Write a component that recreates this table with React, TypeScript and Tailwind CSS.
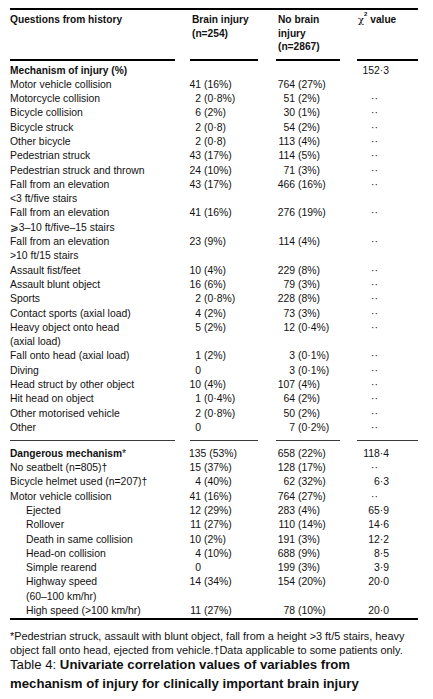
type Cell = [string, string];

type Row = {
  label: string[];
  b?: Cell;
  n?: Cell;
  chi?: string;
  bold?: boolean;
  star?: boolean;
  indent?: boolean;
};

const mechanism: Row[] = [
  { label: ["Mechanism of injury (%)"], bold: true, chi: "152·3" },
  { label: ["Motor vehicle collision"], b: ["41", "(16%)"], n: ["764", "(27%)"] },
  { label: ["Motorcycle collision"], b: ["2", "(0·8%)"], n: ["51", "(2%)"], chi: "··" },
  { label: ["Bicycle collision"], b: ["6", "(2%)"], n: ["30", "(1%)"], chi: "··" },
  { label: ["Bicycle struck"], b: ["2", "(0·8)"], n: ["54", "(2%)"], chi: "··" },
  { label: ["Other bicycle"], b: ["2", "(0·8)"], n: ["113", "(4%)"], chi: "··" },
  { label: ["Pedestrian struck"], b: ["43", "(17%)"], n: ["114", "(5%)"], chi: "··" },
  { label: ["Pedestrian struck and thrown"], b: ["24", "(10%)"], n: ["71", "(3%)"], chi: "··" },
  { label: ["Fall from an elevation", "<3 ft/five stairs"], b: ["43", "(17%)"], n: ["466", "(16%)"], chi: "··" },
  { label: ["Fall from an elevation", "⩾3–10 ft/five–15 stairs"], b: ["41", "(16%)"], n: ["276", "(19%)"], chi: "··" },
  { label: ["Fall from an elevation", ">10 ft/15 stairs"], b: ["23", "(9%)"], n: ["114", "(4%)"], chi: "··" },
  { label: ["Assault fist/feet"], b: ["10", "(4%)"], n: ["229", "(8%)"], chi: "··" },
  { label: ["Assault blunt object"], b: ["16", "(6%)"], n: ["79", "(3%)"], chi: "··" },
  { label: ["Sports"], b: ["2", "(0·8%)"], n: ["228", "(8%)"], chi: "··" },
  { label: ["Contact sports (axial load)"], b: ["4", "(2%)"], n: ["73", "(3%)"], chi: "··" },
  { label: ["Heavy object onto head", "(axial load)"], b: ["5", "(2%)"], n: ["12", "(0·4%)"], chi: "··" },
  { label: ["Fall onto head (axial load)"], b: ["1", "(2%)"], n: ["3", "(0·1%)"], chi: "··" },
  { label: ["Diving"], b: ["0", ""], n: ["3", "(0·1%)"], chi: "··" },
  { label: ["Head struct by other object"], b: ["10", "(4%)"], n: ["107", "(4%)"], chi: "··" },
  { label: ["Hit head on object"], b: ["1", "(0·4%)"], n: ["64", "(2%)"], chi: "··" },
  { label: ["Other motorised vehicle"], b: ["2", "(0·8%)"], n: ["50", "(2%)"], chi: "··" },
  { label: ["Other"], b: ["0", ""], n: ["7", "(0·2%)"], chi: "··" },
];

const dangerous: Row[] = [
  { label: ["Dangerous mechanism"], bold: true, star: true, b: ["135", "(53%)"], n: ["658", "(22%)"], chi: "118·4" },
  { label: ["No seatbelt (n=805)†"], b: ["15", "(37%)"], n: ["128", "(17%)"], chi: "··" },
  { label: ["Bicycle helmet used (n=207)†"], b: ["4", "(40%)"], n: ["62", "(32%)"], chi: "6·3" },
  { label: ["Motor vehicle collision"], b: ["41", "(16%)"], n: ["764", "(27%)"], chi: "··" },
  { label: ["Ejected"], indent: true, b: ["12", "(29%)"], n: ["283", "(4%)"], chi: "65·9" },
  { label: ["Rollover"], indent: true, b: ["11", "(27%)"], n: ["110", "(14%)"], chi: "14·6" },
  { label: ["Death in same collision"], indent: true, b: ["10", "(2%)"], n: ["191", "(3%)"], chi: "12·2" },
  { label: ["Head-on collision"], indent: true, b: ["4", "(10%)"], n: ["688", "(9%)"], chi: "8·5" },
  { label: ["Simple rearend"], indent: true, b: ["0", ""], n: ["199", "(3%)"], chi: "3·9" },
  { label: ["Highway speed", "(60–100 km/hr)"], indent: true, b: ["14", "(34%)"], n: ["154", "(20%)"], chi: "20·0" },
  { label: ["High speed (>100 km/hr)"], indent: true, b: ["11", "(27%)"], n: ["78", "(10%)"], chi: "20·0" },
];

const Count = ({ cell, numWidth }: { cell?: Cell; numWidth: string }) => {
  if (!cell) return null;
  return (
    <div className="flex whitespace-nowrap">
      <span className={`${numWidth} text-right`}>{cell[0]}</span>
      {cell[1] && <span className="pl-[3px]">{cell[1]}</span>}
    </div>
  );
};

const TableRow = ({ row }: { row: Row }) => (
  <div className="flex items-start leading-[14.3px]">
    <div className={`w-[179px] ${row.indent ? "pl-[16px]" : ""}`}>
      {row.label.map((line, i) => (
        <div key={i} className="whitespace-nowrap">
          {row.bold ? <span className="font-bold text-[10.2px]">{line}</span> : line}
          {row.star && "*"}
        </div>
      ))}
    </div>
    <div className="w-[88px]">
      <Count cell={row.b} numWidth="min-w-[12px]" />
    </div>
    <div className="w-[80px]">
      <Count cell={row.n} numWidth="min-w-[18px]" />
    </div>
    <div className="w-[32px]">
      {row.chi === "··" ? (
        <div className="text-center pl-[3px]">··</div>
      ) : (
        <div className="text-right">{row.chi}</div>
      )}
    </div>
  </div>
);

const SplitRule = ({ thick }: { thick?: boolean }) => {
  const c = thick ? "h-[2px] bg-black" : "h-px bg-[#3a3a3a]";
  return (
    <div className="flex">
      <div className={`w-[165px] ${c}`} />
      <div className={`ml-[15px] w-[68px] ${c}`} />
      <div className={`ml-[18px] w-[64px] ${c}`} />
      <div className={`ml-[17px] w-[61px] ${c}`} />
    </div>
  );
};

export default function App() {
  return (
    <div className="w-[433px] h-[699px] bg-white text-[#111] font-['Liberation_Sans','DejaVu_Sans',Arial,sans-serif] text-[10.4px] overflow-hidden">
      <div className="pl-[10px] pr-[15px] pt-[8px]">
        <div className="h-[2px] bg-black" />

        <div className="flex items-start pt-[3px] pb-[5px] leading-[13.5px] font-bold text-[10.2px]">
          <div className="w-[179px]">Questions from history</div>
          <div className="w-[88px] pl-[3px]">
            <div>Brain injury</div>
            <div>(n=254)</div>
          </div>
          <div className="w-[80px] pl-[1px]">
            <div>No brain</div>
            <div>injury</div>
            <div>(n=2867)</div>
          </div>
          <div className="pl-[1px] whitespace-nowrap">
            <span className="font-normal font-['DejaVu_Serif',serif] text-[10px]">χ</span>
            <sup className="text-[6px] align-[4px]">2</sup> value
          </div>
        </div>

        <SplitRule thick />

        <div className="pt-[3px] pb-[5px]">
          {mechanism.map((row, i) => (
            <TableRow key={i} row={row} />
          ))}
        </div>

        <SplitRule />

        <div className="pt-[5.5px]">
          {dangerous.map((row, i) => (
            <TableRow key={i} row={row} />
          ))}
        </div>

        <div className="h-[2px] bg-black" />

        <p className="pt-[9px] text-[10.9px] leading-[14px] whitespace-nowrap">
          *Pedestrian struck, assault with blunt object, fall from a height &gt;3 ft/5 stairs, heavy
          <br />
          object fall onto head, ejected from vehicle.†Data applicable to some patients only.
        </p>

        <p className="-mt-[2px] text-[13.2px] leading-[19px] whitespace-nowrap">
          Table 4: <span className="font-bold">Univariate correlation values of variables from</span>
          <br />
          <span className="font-bold">mechanism of injury for clinically important brain injury</span>
        </p>
      </div>
    </div>
  );
}
